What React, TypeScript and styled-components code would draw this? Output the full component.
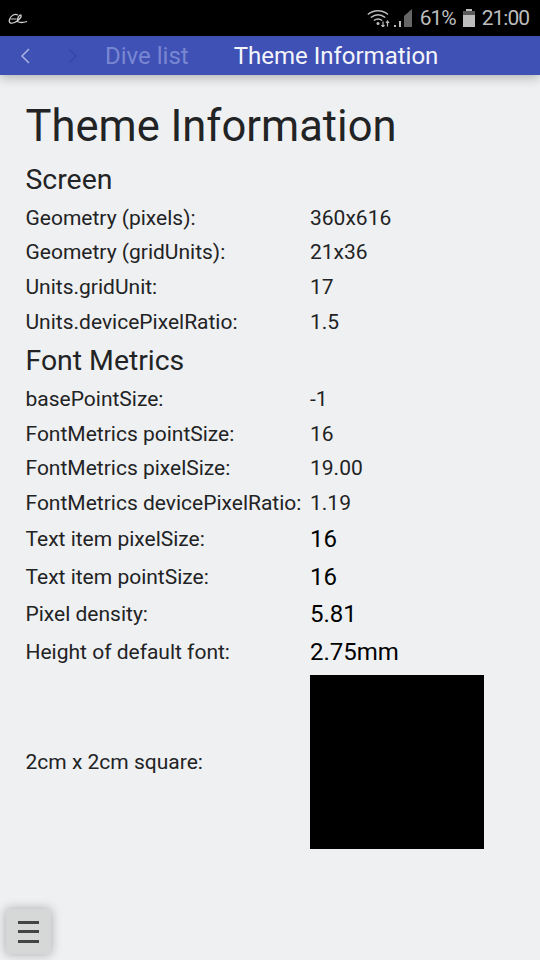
import React from "react";
import styled, { createGlobalStyle } from "styled-components";

const GlobalStyle = createGlobalStyle`
  html, body {
    margin: 0;
    padding: 0;
    background: #eff0f2;
  }
  body {
    font-family: Roboto, "Liberation Sans", sans-serif;
  }
`;

const App = () => {
  return (
    <Page>
      <GlobalStyle />
      <StatusBar>
        <Logo viewBox="0 0 20 12">
          <path d="M10 2C7 .5 3 2 1.500 6.500 .5 10 3 11 6.500 9.500 10 8 14 4 13 2.200 11.500 1 9 5 9.500 8.500 12 10 16 9.500 19 8.500" fill="none" stroke="#d0d0d0" strokeWidth="1.300" />
          <path d="M2.500 6h6" stroke="#d0d0d0" strokeWidth="1" />
        </Logo>
        <StatusRight>
          <Wifi viewBox="0 0 24 18">
            <path d="M.8 5.500C6.500 .5 15.500 .5 21 5.500M3.800 8.500c4.500-3.500 10-3.500 14.500 0M6.800 11.500c3-2 5.500-2 8.500 0" fill="none" stroke="#bdbdbd" strokeWidth="1.500" />
            <circle cx="11" cy="14.500" r="1.500" fill="#bdbdbd" />
            <path d="M16 12.500v5M14.500 16l1.500 2 1.500-2M20.500 17.500v-5M19 14l1.500-2 1.500 2" fill="none" stroke="#bdbdbd" strokeWidth="1.200" />
          </Wifi>
          <Signal viewBox="0 0 18 18">
            <path d="M0 16h2v2H0zM5 12h2v6H5z" fill="#bdbdbd" />
            <path d="M10 18V7l8-7v18z" fill="#666" />
          </Signal>
          <StatusText>61%</StatusText>
          <Battery>
            <BatteryCap />
            <BatteryBody />
          </Battery>
          <StatusText>21:00</StatusText>
        </StatusRight>
      </StatusBar>
      <NavBar>
        <NavIcon viewBox="0 0 12 18">
          <path d="M10 2 3 9l7 7" fill="none" stroke="#aab3e0" strokeWidth="1.500" />
        </NavIcon>
        <NavIconDim viewBox="0 0 12 18">
          <path d="M2 2l7 7-7 7" fill="none" stroke="#3448a5" strokeWidth="1.500" />
        </NavIconDim>
        <NavPrev>Dive list</NavPrev>
        <NavTitle>Theme Information</NavTitle>
      </NavBar>
      <Content>
        <Title>Theme Information</Title>
        <SectionHead>Screen</SectionHead>
        <Row><Label>Geometry (pixels):</Label><Value>360x616</Value></Row>
        <Row><Label>Geometry (gridUnits):</Label><Value>21x36</Value></Row>
        <Row><Label>Units.gridUnit:</Label><Value>17</Value></Row>
        <Row><Label>Units.devicePixelRatio:</Label><Value>1.5</Value></Row>
        <SectionHead>Font Metrics</SectionHead>
        <Row><Label>basePointSize:</Label><Value>-1</Value></Row>
        <Row><Label>FontMetrics pointSize:</Label><Value>16</Value></Row>
        <Row><Label>FontMetrics pixelSize:</Label><Value>19.00</Value></Row>
        <Row><Label>FontMetrics devicePixelRatio:</Label><Value>1.19</Value></Row>
        <BigRow><Label>Text item pixelSize:</Label><BigValue>16</BigValue></BigRow>
        <BigRow><Label>Text item pointSize:</Label><BigValue>16</BigValue></BigRow>
        <BigRow><Label>Pixel density:</Label><BigValue>5.81</BigValue></BigRow>
        <BigRow><Label>Height of default font:</Label><BigValue>2.75mm</BigValue></BigRow>
        <SquareRow>
          <Label>2cm x 2cm square:</Label>
          <Square />
        </SquareRow>
      </Content>
      <MenuButton>
        <MenuBar />
        <MenuBar />
        <MenuBar />
      </MenuButton>
    </Page>
  );
};

export default App;

const Page = styled.div`
  position: relative;
  width: 540px;
  height: 960px;
  overflow: hidden;
  background: #eff0f2;
  color: #222324;
`;
const StatusBar = styled.div`
  height: 36px;
  background: #000;
  display: flex;
  align-items: center;
  justify-content: space-between;
  padding: 0 11px 0 8px;
`;
const Logo = styled.svg`
  width: 20px;
  height: 12px;
  margin-top: 1px;
`;
const StatusRight = styled.div`
  display: flex;
  align-items: center;
`;
const Wifi = styled.svg`
  width: 24px;
  height: 18px;
  margin-right: 3px;
`;
const Signal = styled.svg`
  width: 18px;
  height: 18px;
  margin-right: 8px;
`;
const StatusText = styled.span`
  color: #bdbdbd;
  font-size: 21px;
  line-height: 36px;
  letter-spacing: -1px;
`;
const Battery = styled.div`
  width: 12px;
  height: 18px;
  margin: 0 7px;
  display: flex;
  flex-direction: column;
  align-items: center;
`;
const BatteryCap = styled.div`
  width: 6px;
  height: 2px;
  background: #bdbdbd;
`;
const BatteryBody = styled.div`
  width: 12px;
  height: 16px;
  background: linear-gradient(#5a5a5a 0 4px, #bdbdbd 4px);
`;
const NavBar = styled.div`
  height: 39px;
  background: #3f51b5;
  display: flex;
  align-items: center;
  font-size: 24px;
  position: relative;
  box-shadow: 0 3px 10px rgba(0, 0, 0, 0.25);
`;
const NavIcon = styled.svg`
  width: 12px;
  height: 18px;
  margin-left: 19px;
`;
const NavIconDim = styled.svg`
  width: 12px;
  height: 18px;
  margin-left: 36px;
`;
const NavPrev = styled.span`
  color: #7987d2;
  margin-left: 26px;
`;
const NavTitle = styled.span`
  color: #f4f5fb;
  margin-left: 45px;
`;
const Content = styled.div`
  padding: 22px 0 0 25.500px;
`;
const Title = styled.div`
  font-size: 43.500px;
  line-height: 60.500px;
`;
const SectionHead = styled.div`
  font-size: 28.400px;
  line-height: 39px;
  margin: 2px 0;
`;
const Row = styled.div`
  display: grid;
  grid-template-columns: 284.500px 1fr;
  align-items: center;
  height: 34.600px;
  font-size: 21px;
`;
const BigRow = styled(Row)`
  height: 37.600px;
`;
const Label = styled.div`
  white-space: nowrap;
`;
const Value = styled.div`
  white-space: nowrap;
`;
const BigValue = styled(Value)`
  font-size: 24px;
  color: #000;
`;
const SquareRow = styled(Row)`
  height: auto;
  margin-top: 4px;
`;
const Square = styled.div`
  width: 174px;
  height: 174px;
  background: #000;
`;
const MenuButton = styled.div`
  position: absolute;
  left: 6px;
  bottom: 6px;
  width: 45px;
  height: 45px;
  background: #d6d8d8;
  box-shadow: 0 0 10px rgba(0, 0, 0, 0.3);
  display: flex;
  flex-direction: column;
  align-items: center;
  justify-content: center;
  gap: 6.500px;
`;
const MenuBar = styled.div`
  width: 21px;
  height: 3px;
  background: #444;
`;
